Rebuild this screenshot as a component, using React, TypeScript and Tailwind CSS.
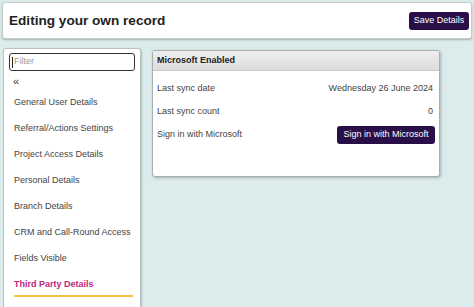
import React from "react";

const navItems = [
  "General User Details",
  "Referral/Actions Settings",
  "Project Access Details",
  "Personal Details",
  "Branch Details",
  "CRM and Call-Round Access",
  "Fields Visible",
];

export default function App() {
  return (
    <div
      className="w-[474px] h-[307px] overflow-hidden bg-[#dcecec] flex flex-col"
      style={{ fontFamily: '"Liberation Sans", Arial, sans-serif' }}
    >
      <div className="mx-[2px] mt-[2px] h-[37px] shrink-0 bg-white border border-[#c4cbcb] rounded-[3px] shadow-[0_1px_2px_rgba(0,0,0,0.25)] flex items-center justify-between pl-[6px] pr-[2px]">
        <h1 className="text-[13.6px] font-bold text-[#222] leading-none">Editing your own record</h1>
        <button className="h-[18px] w-[60px] rounded-[3px] bg-[#2a0e48] text-white text-[9px] leading-none whitespace-nowrap">
          Save Details
        </button>
      </div>
      <div className="flex flex-1 mt-[9px] gap-[11px] min-h-0">
        <div className="ml-[3px] w-[138px] bg-white border border-[#b9c3c3] border-b-0 rounded-t-[3px] shadow-[1px_1px_2px_rgba(0,0,0,0.2)] flex flex-col px-[5px] pt-[4px]">
          <div className="h-[18px] border border-[#333] rounded-[3px] flex items-center px-[2px] text-[9px] text-[#999]">
            <span className="w-px h-[11px] bg-[#222] mr-px" />
            Filter
          </div>
          <div className="pl-[4px] text-[11px] text-[#333] mt-[5px] leading-none">«</div>
          <div className="flex flex-col pl-[5px] mt-[3px]">
            {navItems.map((t) => (
              <div key={t} className="h-[26px] flex items-center text-[9px] text-[#444] whitespace-nowrap">
                {t}
              </div>
            ))}
            <div className="h-[26px] flex flex-col justify-center text-[9px] font-bold text-[#c0267e]">
              <span className="mt-[5px]">Third Party Details</span>
              <div className="mt-[3px] h-[2px] bg-[#f0c24a] mr-[2px]" />
            </div>
          </div>
        </div>
        <div className="flex-1 pr-[34px] pt-[2px]">
          <div className="bg-white border border-[#a7afaf] rounded-[3px] shadow-[1px_1px_3px_rgba(0,0,0,0.25)] h-[127px] overflow-hidden">
            <div className="h-[20px] bg-gradient-to-b from-[#efefef] to-[#dcdcdc] border-b border-[#c8c8c8] flex items-center px-[4px] text-[9px] font-bold text-[#222]">
              Microsoft Enabled
            </div>
            <div className="flex flex-col px-[4px] pt-[6px] text-[9px] text-[#444]">
              <div className="h-[23px] flex items-center justify-between pr-[2px]">
                <span>Last sync date</span>
                <span>Wednesday 26 June 2024</span>
              </div>
              <div className="h-[23px] flex items-center justify-between pr-[2px]">
                <span>Last sync count</span>
                <span>0</span>
              </div>
              <div className="h-[23px] flex items-center justify-between">
                <span>Sign in with Microsoft</span>
                <button className="h-[18px] w-[98px] rounded-[3px] bg-[#2a0e48] text-white text-[9px] leading-none whitespace-nowrap">
                  Sign in with Microsoft
                </button>
              </div>
            </div>
          </div>
        </div>
      </div>
    </div>
  );
}
